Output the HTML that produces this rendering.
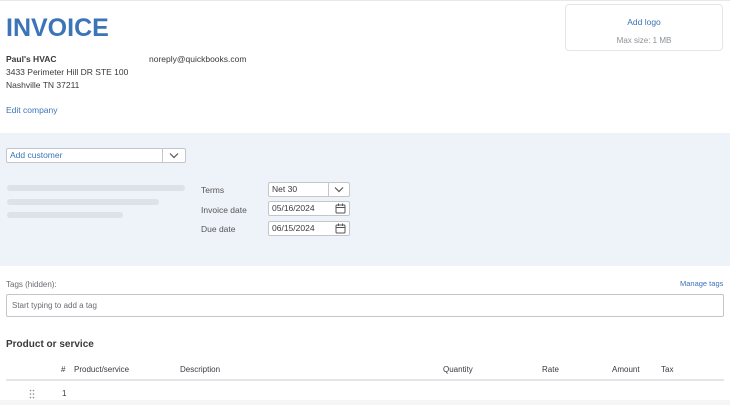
<!DOCTYPE html>
<html><head><style>
body{margin:0;width:730px;height:405px;overflow:hidden;background:#fff;font-family:"Liberation Sans",sans-serif;color:#393a3d;position:relative}
.a{position:absolute;white-space:nowrap}
.s{font-size:8.5px}
.band{position:absolute;left:0;top:133px;width:730px;height:133px;background:#eef3f9}
.box{position:absolute;background:#fff;border:1px solid #c4c6ca;border-radius:2px;box-sizing:border-box;font-size:8.5px;padding-left:3px;line-height:13px}
.bar{position:absolute;height:6px;border-radius:3px;background:#dde2e8}
.chev{position:absolute;top:0;right:0;height:100%;border-left:1px solid #c4c6ca}
</style></head><body>
<div style="position:absolute;left:0;top:0;width:730px;height:1px;background:#e8e8e8"></div>
<div class="a" style="left:6px;top:14px;font-size:25px;font-weight:bold;color:#3b74b8">INVOICE</div>
<div class="a s" style="left:6px;top:54px;font-weight:bold">Paul's HVAC</div>
<div class="a s" style="left:6px;top:67px">3433 Perimeter Hill DR STE 100</div>
<div class="a s" style="left:6px;top:80px">Nashville TN 37211</div>
<div class="a s" style="left:149px;top:54px">noreply@quickbooks.com</div>
<div class="a s" style="left:6px;top:105px;color:#3b74b8">Edit company</div>
<div style="position:absolute;left:565px;top:4px;width:158px;height:47px;border:1px solid #e3e5e8;border-radius:4px;box-sizing:border-box"></div>
<div class="a" style="left:565px;width:158px;text-align:center;top:17px;font-size:8.5px;color:#3b74b8">Add logo</div>
<div class="a" style="left:565px;width:158px;text-align:center;top:36px;font-size:8px;color:#8d9096">Max size: 1 MB</div>
<div class="band"></div>
<div class="box" style="left:6px;top:148px;width:180px;height:15px;color:#3b74b8">Add customer<div class="chev" style="width:22px"><svg width="22" height="13" viewBox="0 0 22 13"><path d="M7 4.5l4 4 4-4" fill="none" stroke="#555" stroke-width="1.2"/></svg></div></div>
<div class="bar" style="left:7px;top:185px;width:178px"></div>
<div class="bar" style="left:7px;top:199px;width:152px"></div>
<div class="bar" style="left:7px;top:212px;width:116px"></div>
<div class="a s" style="left:201px;top:185px;color:#555">Terms</div>
<div class="a s" style="left:201px;top:205px;color:#555">Invoice date</div>
<div class="a s" style="left:201px;top:224px;color:#555">Due date</div>
<div class="box" style="left:268px;top:182px;width:82px;height:15px">Net 30<div class="chev" style="width:20px"><svg width="20" height="13" viewBox="0 0 20 13"><path d="M6 4.5l4 4 4-4" fill="none" stroke="#555" stroke-width="1.2"/></svg></div></div>
<div class="box" style="left:268px;top:201px;width:82px;height:15px">05/16/2024<svg style="position:absolute;right:3px;top:1px" width="11" height="11" viewBox="0 0 11 11"><rect x="1" y="2" width="9" height="8" rx="1" fill="none" stroke="#555"/><path d="M1 4.5h9M3.5 0.5v2.5M7.5 0.5v2.5" stroke="#555"/></svg></div>
<div class="box" style="left:268px;top:221px;width:82px;height:15px">06/15/2024<svg style="position:absolute;right:3px;top:1px" width="11" height="11" viewBox="0 0 11 11"><rect x="1" y="2" width="9" height="8" rx="1" fill="none" stroke="#555"/><path d="M1 4.5h9M3.5 0.5v2.5M7.5 0.5v2.5" stroke="#555"/></svg></div>
<div class="a" style="left:6px;top:280px;font-size:8px;color:#6b6c72">Tags (hidden):</div>
<div class="a" style="left:680px;top:279px;font-size:7.5px;color:#3b74b8">Manage tags</div>
<div style="position:absolute;left:6px;top:294px;width:718px;height:23px;border:1px solid #c4c6ca;border-radius:2px;box-sizing:border-box"></div>
<div class="a" style="left:12px;top:301px;font-size:8px;color:#6b6c72">Start typing to add a tag</div>
<div class="a" style="left:6px;top:339px;font-size:10px;font-weight:bold">Product or service</div>
<div class="a" style="left:61px;top:365px;font-size:8px">#</div>
<div class="a" style="left:74px;top:365px;font-size:8px">Product/service</div>
<div class="a" style="left:180px;top:365px;font-size:8px">Description</div>
<div class="a" style="left:443px;top:365px;font-size:8px">Quantity</div>
<div class="a" style="left:542px;top:365px;font-size:8px">Rate</div>
<div class="a" style="left:612px;top:365px;font-size:8px">Amount</div>
<div class="a" style="left:661px;top:365px;font-size:8px">Tax</div>
<div style="position:absolute;left:6px;top:379px;width:718px;height:2px;background:#e3e5e8"></div>
<svg style="position:absolute;left:29px;top:389px" width="6" height="10" viewBox="0 0 6 10"><g fill="#888"><circle cx="1.5" cy="1.5" r=".8"/><circle cx="4.5" cy="1.5" r=".8"/><circle cx="1.5" cy="5" r=".8"/><circle cx="4.5" cy="5" r=".8"/><circle cx="1.5" cy="8.5" r=".8"/><circle cx="4.5" cy="8.5" r=".8"/></g></svg>
<div class="a" style="left:62px;top:389px;font-size:8px">1</div>
<div style="position:absolute;left:0;top:400px;width:730px;height:5px;background:#f6f6f6"></div>
</body></html>
